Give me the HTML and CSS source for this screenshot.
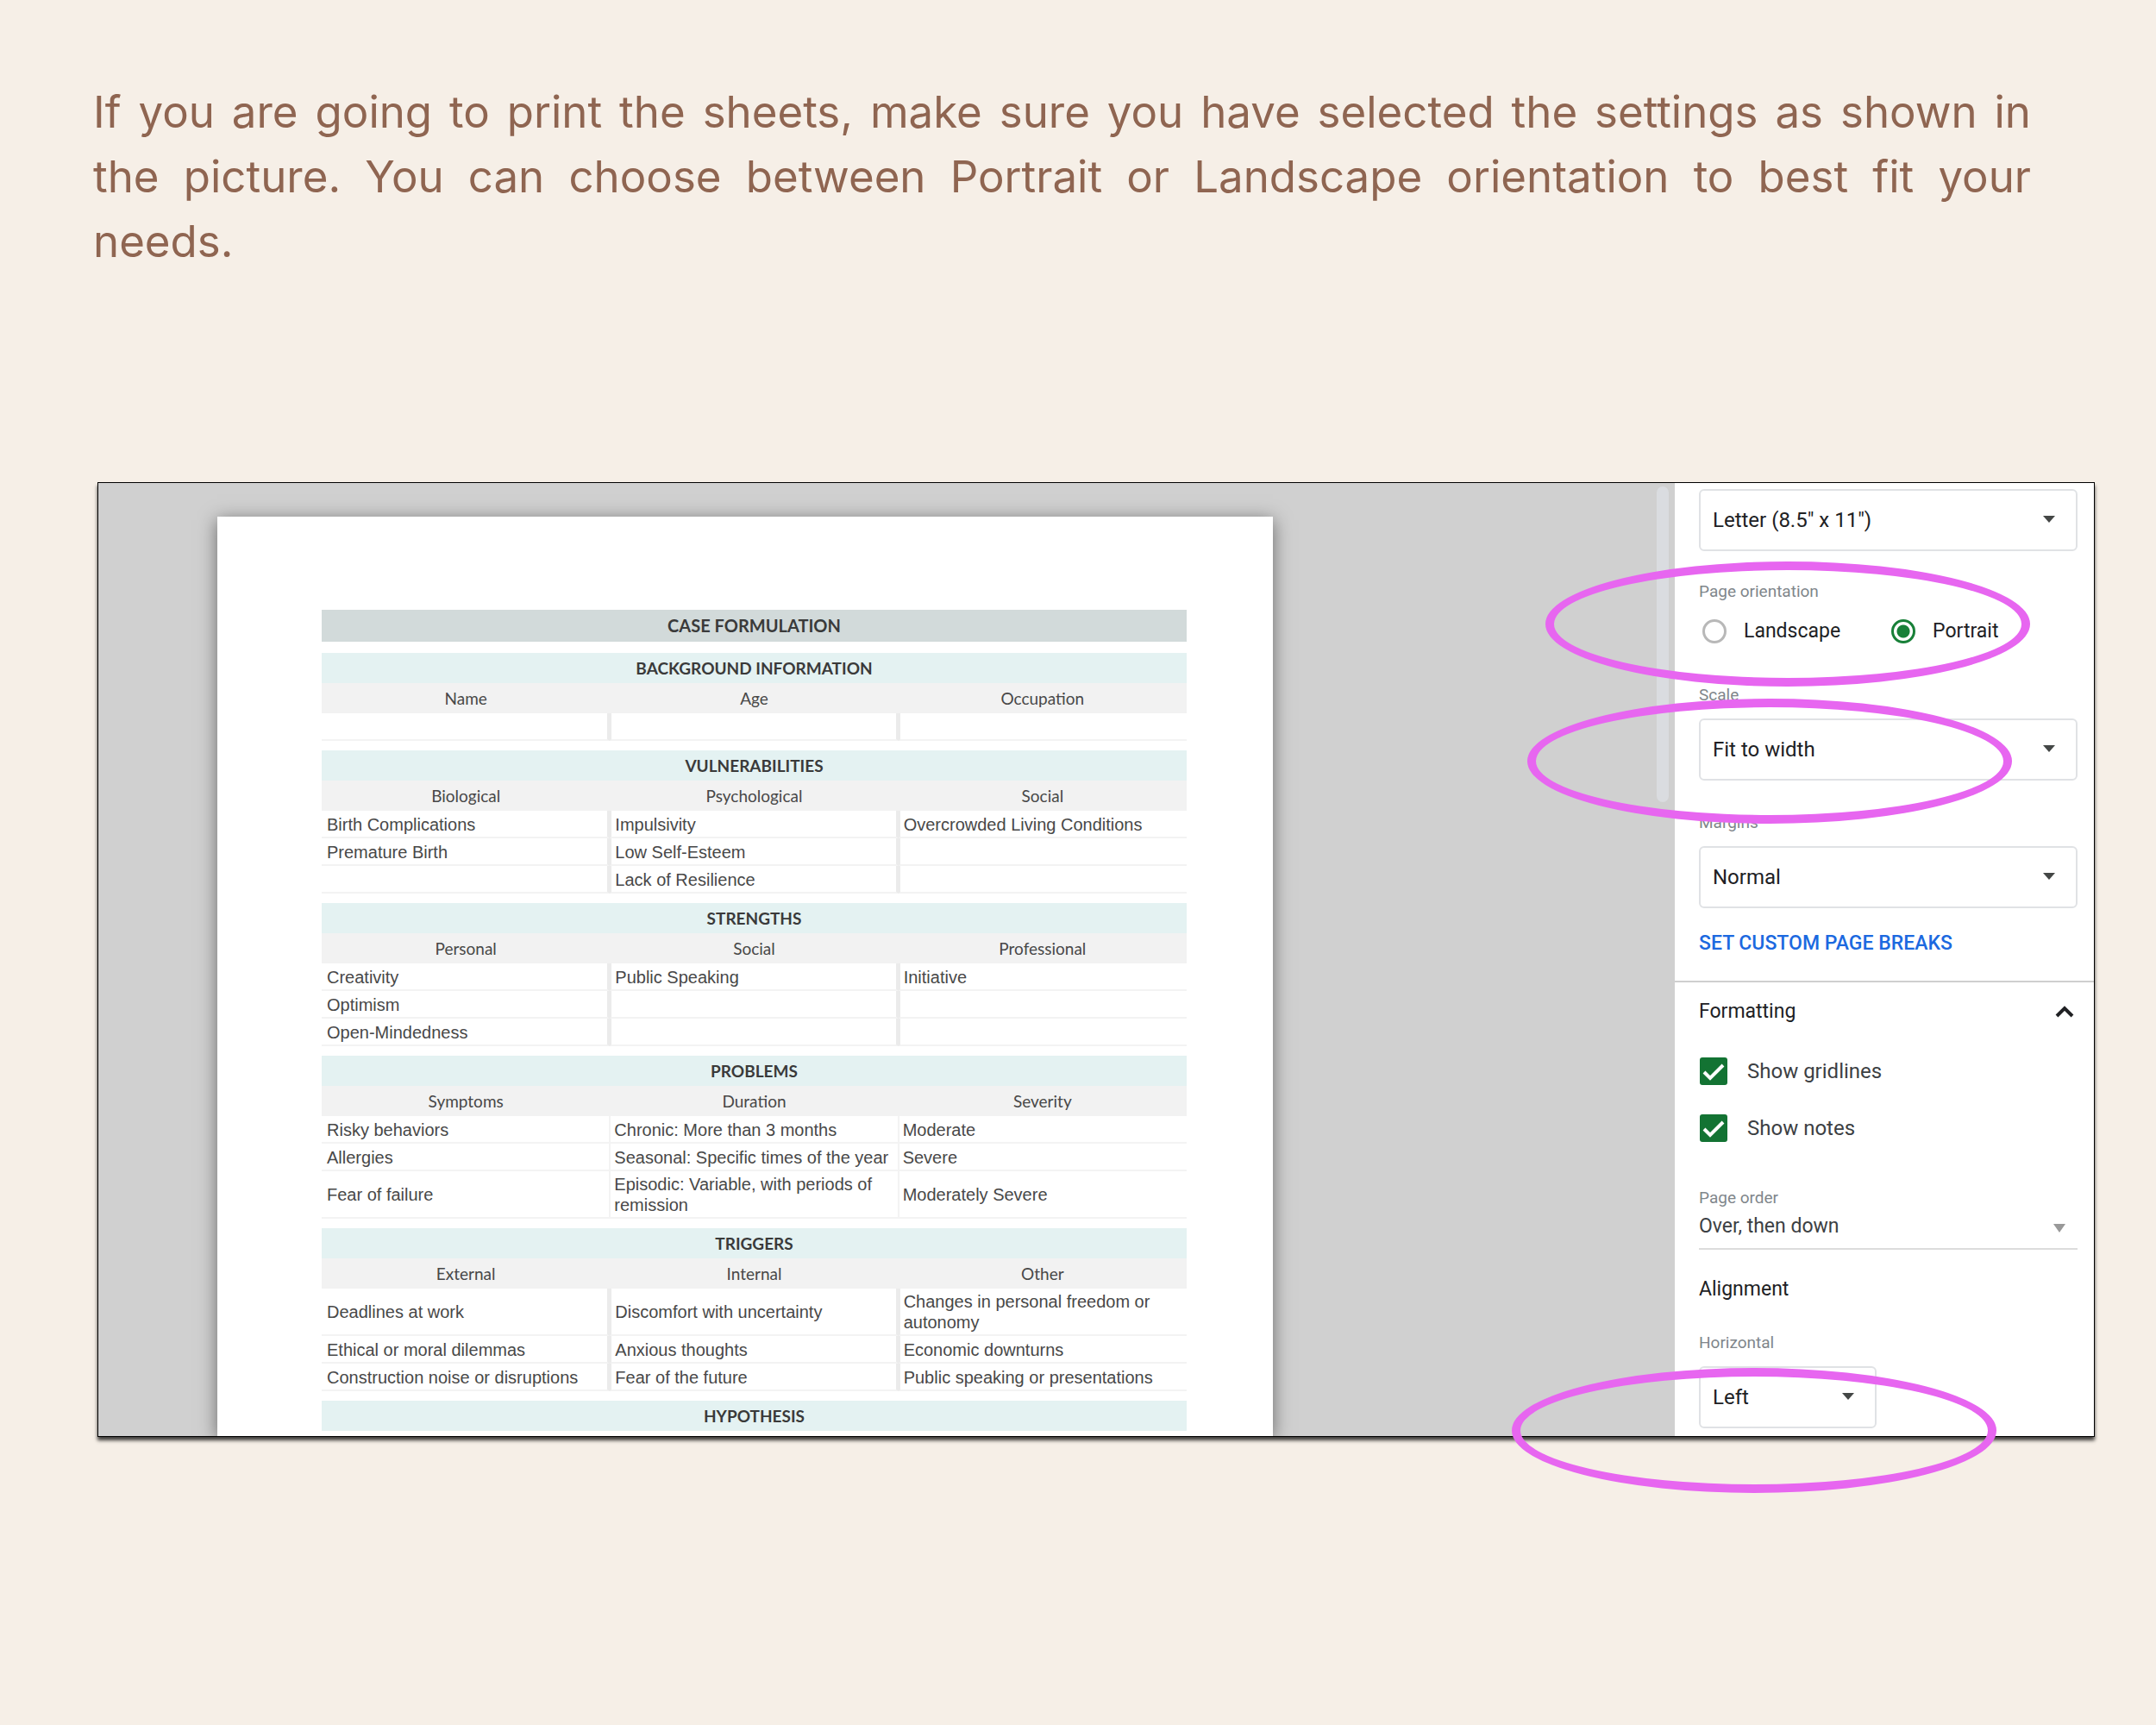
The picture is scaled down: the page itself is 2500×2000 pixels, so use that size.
FILE: index.html
```html
<!DOCTYPE html>
<html lang="en">
<head>
<meta charset="utf-8">
<title>Print settings guide</title>
<link rel="stylesheet" href="styles.css">
</head>
<body>
<main>
  <p class="intro"><span class="full">If you are going to print the sheets, make sure you have selected the settings as shown in</span> <span class="full">the picture. You can choose between Portrait or Landscape orientation to best fit your</span> needs.</p>

  <section class="frame">
    <div class="preview">
      <article class="paper">
        <h1 class="sheet-title">CASE FORMULATION</h1>

        <table class="sheet">
          <thead>
            <tr class="group"><th colspan="3">BACKGROUND INFORMATION</th></tr>
            <tr class="cols"><th>Name</th><th>Age</th><th>Occupation</th></tr>
          </thead>
          <tbody>
            <tr><td></td><td></td><td></td></tr>
          </tbody>
        </table>

        <table class="sheet">
          <thead>
            <tr class="group"><th colspan="3">VULNERABILITIES</th></tr>
            <tr class="cols"><th>Biological</th><th>Psychological</th><th>Social</th></tr>
          </thead>
          <tbody>
            <tr><td>Birth Complications</td><td>Impulsivity</td><td>Overcrowded Living Conditions</td></tr>
            <tr><td>Premature Birth</td><td>Low Self-Esteem</td><td></td></tr>
            <tr><td></td><td>Lack of Resilience</td><td></td></tr>
          </tbody>
        </table>

        <table class="sheet">
          <thead>
            <tr class="group"><th colspan="3">STRENGTHS</th></tr>
            <tr class="cols"><th>Personal</th><th>Social</th><th>Professional</th></tr>
          </thead>
          <tbody>
            <tr><td>Creativity</td><td>Public Speaking</td><td>Initiative</td></tr>
            <tr><td>Optimism</td><td></td><td></td></tr>
            <tr><td>Open-Mindedness</td><td></td><td></td></tr>
          </tbody>
        </table>

        <table class="sheet thin">
          <thead>
            <tr class="group"><th colspan="3">PROBLEMS</th></tr>
            <tr class="cols"><th>Symptoms</th><th>Duration</th><th>Severity</th></tr>
          </thead>
          <tbody>
            <tr><td>Risky behaviors</td><td>Chronic: More than 3 months</td><td>Moderate</td></tr>
            <tr><td>Allergies</td><td>Seasonal: Specific times of the year</td><td>Severe</td></tr>
            <tr><td>Fear of failure</td><td>Episodic: Variable, with periods of remission</td><td>Moderately Severe</td></tr>
          </tbody>
        </table>

        <table class="sheet">
          <thead>
            <tr class="group"><th colspan="3">TRIGGERS</th></tr>
            <tr class="cols"><th>External</th><th>Internal</th><th>Other</th></tr>
          </thead>
          <tbody>
            <tr><td>Deadlines at work</td><td>Discomfort with uncertainty</td><td>Changes in personal freedom or autonomy</td></tr>
            <tr><td>Ethical or moral dilemmas</td><td>Anxious thoughts</td><td>Economic downturns</td></tr>
            <tr><td>Construction noise or disruptions</td><td>Fear of the future</td><td>Public speaking or presentations</td></tr>
          </tbody>
        </table>

        <table class="sheet">
          <thead>
            <tr class="group"><th colspan="3">HYPOTHESIS</th></tr>
          </thead>
        </table>
      </article>
      <div class="scroll-thumb"></div>
    </div>

    <form class="settings">
      <div class="picker">
        <select aria-label="Paper size"><option>Letter (8.5" x 11")</option></select>
        <svg class="caret" viewBox="0 0 14 8" aria-hidden="true"><path d="M0 0h14L7 8z"/></svg>
      </div>

      <fieldset class="orientation">
        <legend class="label">Page orientation</legend>
        <div class="radios">
          <label><input type="radio" name="orientation">Landscape</label>
          <label><input type="radio" name="orientation" checked>Portrait</label>
        </div>
      </fieldset>

      <label class="label scale" for="scale">Scale</label>
      <div class="picker">
        <select id="scale"><option>Fit to width</option></select>
        <svg class="caret" viewBox="0 0 14 8" aria-hidden="true"><path d="M0 0h14L7 8z"/></svg>
      </div>

      <label class="label margins" for="margins">Margins</label>
      <div class="picker">
        <select id="margins"><option>Normal</option></select>
        <svg class="caret" viewBox="0 0 14 8" aria-hidden="true"><path d="M0 0h14L7 8z"/></svg>
      </div>

      <a class="breaks" href="#breaks">SET CUSTOM PAGE BREAKS</a>

      <button class="section-toggle" type="button">
        <span>Formatting</span>
        <svg class="chevron" viewBox="0 0 22 14" aria-hidden="true"><path d="M2 12l9-9 9 9"/></svg>
      </button>

      <div class="checks">
        <label><input type="checkbox" checked><svg viewBox="0 0 32 32" aria-hidden="true"><path d="M5 17l7 7L27 9"/></svg>Show gridlines</label>
        <label><input type="checkbox" checked><svg viewBox="0 0 32 32" aria-hidden="true"><path d="M5 17l7 7L27 9"/></svg>Show notes</label>
      </div>

      <label class="label order" for="order">Page order</label>
      <div class="picker line">
        <select id="order"><option>Over, then down</option></select>
        <svg class="caret" viewBox="0 0 14 10" aria-hidden="true"><path d="M0 0h14L7 10z"/></svg>
      </div>

      <h2 class="heading">Alignment</h2>
      <label class="label horizontal" for="horizontal">Horizontal</label>
      <div class="picker short">
        <select id="horizontal"><option>Left</option></select>
        <svg class="caret" viewBox="0 0 14 8" aria-hidden="true"><path d="M0 0h14L7 8z"/></svg>
      </div>
    </form>

    <div class="ring ring-orientation"></div>
    <div class="ring ring-scale"></div>
    <div class="ring ring-alignment"></div>
  </section>
</main>
</body>
</html>
```

FILE: styles.css
```css
* {
  box-sizing: border-box;
}

body {
  margin: 0;
  background: #f6efe7;
}

main {
  padding: 92px 71px 80px 108px;
}

.intro {
  margin: 0 74px 242px 0;
  color: #8f6551;
  font: 400 51px/75px Inter, sans-serif;
}

.intro .full {
  display: block;
  text-align: justify;
  text-align-last: justify;
}

.frame {
  position: relative;
  display: grid;
  grid-template-columns: minmax(0, 1fr) 486px;
  margin-left: 5px;
  border: 1px solid #000;
  box-shadow: 0 4px 4px rgba(0, 0, 0, 0.75);
}

/* Sheet preview */
.preview {
  display: flex;
  justify-content: space-between;
  align-items: flex-start;
  padding: 39px 7px 0 138px;
  overflow: hidden;
  background: #d0d0d0;
}

.paper {
  flex: 0 1 1224px;
  align-self: stretch;
  padding: 108px 100px 5px 121px;
  background: #fff;
  box-shadow: 0 4px 20px rgba(0, 0, 0, 0.5);
}

.scroll-thumb {
  width: 14px;
  height: 366px;
  margin-top: -35px;
  border-radius: 7px;
  background: #dadce0;
}

.sheet-title {
  margin: 0 0 13px;
  background: #d2dada;
  color: #3a3a3a;
  font: 700 20px/37px Lato, sans-serif;
  text-align: center;
}

.sheet {
  width: 100%;
  margin-bottom: 11px;
  border-spacing: 0;
  table-layout: fixed;
  color: #484848;
  font: 20px/24px "Liberation Sans", Arial, sans-serif;
}

.sheet:last-child {
  margin-bottom: 0;
}

.sheet th {
  height: 35px;
  padding: 0;
  font: 400 19px/24px Lato, sans-serif;
  text-align: center;
}

.sheet .group th {
  background: #e4f2f2;
  color: #3a3a3a;
  font-weight: 700;
}

.sheet .cols th {
  background: #f2f2f2;
}

.sheet td {
  height: 32px;
  padding: 3px 0 2px 4px;
  border-bottom: 2px solid #f3f3f3;
  vertical-align: middle;
}

.sheet td:first-child {
  padding-left: 6px;
}

.sheet td:not(:last-child) {
  border-right: 3px solid #ebebeb;
}

.sheet td + td {
  border-left: 2px solid #ebebeb;
}

.thin td:not(:last-child) {
  border-right: 1px solid #f3f3f3;
}

.thin td + td {
  border-left: 1px solid #f3f3f3;
}

/* Settings panel */
.settings {
  display: flex;
  flex-direction: column;
  padding: 7px 19px 9px 28px;
  background: #fff;
  color: #202124;
  font: 23px/28px Roboto, sans-serif;
}

.label {
  margin-bottom: 15px;
  color: #80868b;
  font-size: 19px;
  line-height: 24px;
}

.picker {
  position: relative;
}

.picker select {
  display: block;
  width: 100%;
  height: 72px;
  padding: 0 40px 0 14px;
  border: 2px solid #e0e2e5;
  border-radius: 6px;
  appearance: none;
  background: #fff;
  color: #202124;
  font: 24px/28px Roboto, sans-serif;
}

.caret {
  position: absolute;
  top: 50%;
  right: 26px;
  width: 14px;
  margin-top: -5px;
  fill: #444746;
}

.orientation {
  margin: 35px 0 0;
  padding: 0;
  border: 0;
}

.orientation .label {
  margin-bottom: 20px;
  padding: 0;
}

.radios {
  display: flex;
  gap: 59px;
  padding-left: 4px;
}

.radios label {
  display: flex;
  gap: 20px;
  align-items: center;
}

.radios input {
  width: 28px;
  height: 28px;
  margin: 0;
  border: 3px solid #b8b8b8;
  border-radius: 50%;
  appearance: none;
}

.radios input:checked {
  border-color: #188038;
  background: radial-gradient(circle, #188038 7px, #fff 8px);
}

.scale {
  margin-top: 48px;
}

.margins {
  margin-top: 37px;
}

.breaks {
  margin: 27px 0 29px;
  color: #1c69e0;
  font-weight: 500;
  text-decoration: none;
}

.section-toggle {
  display: flex;
  justify-content: space-between;
  align-items: center;
  margin: 0 -19px 0 -28px;
  padding: 20px 23px 0 28px;
  border: 0;
  border-top: 2px solid #cfcfcf;
  background: none;
  color: inherit;
  font: inherit;
}

.chevron {
  width: 22px;
  fill: none;
  stroke: #202124;
  stroke-width: 4;
}

.checks {
  display: grid;
  gap: 34px;
  margin-top: 39px;
}

.checks label {
  display: grid;
  grid-template-columns: 32px auto;
  column-gap: 23px;
  align-items: center;
  padding-left: 1px;
  color: #3c4043;
  font-size: 24px;
}

.checks input,
.checks svg {
  grid-area: 1 / 1;
  width: 32px;
  height: 32px;
  margin: 0;
}

.checks input {
  border-radius: 3px;
  appearance: none;
  background: #137333;
}

.checks svg {
  fill: none;
  stroke: #fff;
  stroke-width: 4;
}

.order {
  margin: 53px 0 7px;
}

.line select {
  height: 41px;
  padding: 0 40px 11px 0;
  border: 0;
  border-bottom: 2px solid #dcdcdc;
  border-radius: 0;
  color: #3c4043;
  font-size: 23px;
}

.line .caret {
  right: 14px;
  margin-top: -10px;
  fill: #999;
}

.heading {
  margin: 32px 0 36px;
  font-size: 23px;
  font-weight: 400;
}

.short {
  width: 206px;
}

/* Highlight rings drawn over the screen */
.ring {
  position: absolute;
  width: 562px;
  height: 145px;
  border: 10px solid #e766f0;
  border-radius: 50%;
  pointer-events: none;
}

.ring-orientation {
  top: 91px;
  right: 74px;
}

.ring-scale {
  top: 250px;
  right: 95px;
}

.ring-alignment {
  right: 113px;
  bottom: -66px;
}
```
